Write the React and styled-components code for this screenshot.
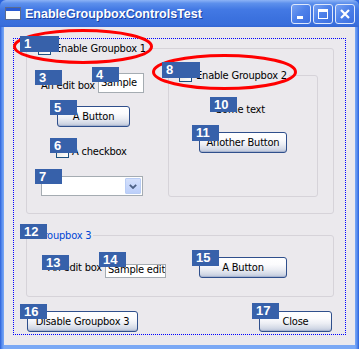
import React from "react";
import styled, { createGlobalStyle } from "styled-components";

const UI = `"DejaVu Sans Condensed", "DejaVu Sans", sans-serif`;
const TITLE = `"Liberation Sans", Arial, sans-serif`;

const Global = createGlobalStyle`
  html, body { margin: 0; padding: 0; background: #ffffff; }
  body { font-family: ${UI}; }
`;

const uiText = `
  font-family: ${UI};
  font-stretch: semi-condensed;
  font-size: 11px;
  line-height: 13px;
  letter-spacing: -0.2px;
`;

const Window = styled.div`
  position: relative;
  width: 359px;
  height: 349px;
  display: flex;
  flex-direction: column;
  background: #2a63de;
  overflow: hidden;
`;

const TitleBar = styled.div`
  height: 27px;
  flex: none;
  display: flex;
  align-items: center;
  padding: 0 4px 0 5px;
  box-sizing: border-box;
  background: linear-gradient(#8db3f6 0%, #5d90ec 12%, #4379e4 35%, #3b71de 70%, #3a6fdc 90%, #3366d4 100%);
  border-radius: 6px 6px 0 0;
`;

const Title = styled.div`
  margin-left: 4px;
  flex: 1;
  color: #ffffff;
  font: bold 12.5px ${TITLE};
  text-shadow: 1px 1px 0 #1a3f9e;
  white-space: nowrap;
`;

const CaptionButtons = styled.div`
  display: flex;
  gap: 2px;
  margin-top: 1px;
`;

const CaptionButton = styled.div`
  box-sizing: border-box;
  width: 20px;
  height: 20px;
  border: 1px solid #dfe8fb;
  border-radius: 3px;
  background: linear-gradient(135deg, #78a2f2 0%, #4f82ea 45%, #3c6fe0 100%);
  display: flex;
  align-items: center;
  justify-content: center;
`;

const Frame = styled.div`
  flex: 1;
  display: flex;
  padding: 0 4px 4px 4px;
  background: linear-gradient(90deg, #2b60d8 0, #5a8ff0 2px, #7aa8f5 4px, #7aa8f5 355px, #5a8ff0 357px, #2b60d8 359px);
`;

const Client = styled.div`
  flex: 1;
  background: #ebe9ed;
  display: flex;
  flex-direction: column;
`;

const FocusRect = styled.div`
  box-sizing: border-box;
  margin: 11px 0 0 9px;
  width: 333px;
  height: 297px;
  border: 1px dotted #0000ff;
  display: flex;
  flex-direction: column;
`;

const GroupBox = styled.fieldset`
  box-sizing: border-box;
  margin: ${(p) => p.$mt}px 0 0 ${(p) => p.$ml}px;
  padding: 0;
  width: ${(p) => p.$w}px;
  height: ${(p) => p.$h}px;
  border: 1px solid #d6d3d9;
  border-radius: 3px;
  min-width: 0;
  flex: none;
`;

const Legend = styled.legend`
  margin-left: ${(p) => p.$ml}px;
  padding: 0 2px;
  height: 13px;
  ${uiText}
  color: ${(p) => p.$color || "#000000"};
`;

const LegendInner = styled.span`
  display: flex;
  align-items: center;
  gap: 4px;
  height: 13px;
`;

const Text = styled.div`
  ${uiText}
  color: #000;
  white-space: nowrap;
  height: 13px;
  width: ${(p) => (p.$w ? `${p.$w}px` : "auto")};
  margin: ${(p) => p.$mt || 0}px 0 0 ${(p) => p.$ml || 0}px;
  flex: none;
`;

const CheckBox = styled.span`
  box-sizing: border-box;
  display: block;
  width: 13px;
  height: 13px;
  flex: none;
  border: 1px solid #1c5180;
  background: linear-gradient(135deg, #dcdcd7 0%, #f4f4f1 60%, #ffffff 100%);
`;

const CheckRow = styled.div`
  display: flex;
  align-items: center;
  gap: 3px;
  margin: ${(p) => p.$mt}px 0 0 ${(p) => p.$ml}px;
  ${uiText}
`;

const Edit = styled.div`
  box-sizing: border-box;
  width: ${(p) => p.$w}px;
  height: ${(p) => p.$h}px;
  margin: ${(p) => p.$mt || 0}px 0 0 ${(p) => p.$ml || 0}px;
  border: 1px solid #a5acb2;
  background: #ffffff;
  padding-left: 2px;
  ${uiText}
  line-height: ${(p) => p.$lh}px;
  white-space: nowrap;
  overflow-x: clip;
  overflow-y: visible;
  flex: none;
`;

const Button = styled.div`
  box-sizing: border-box;
  width: ${(p) => p.$w}px;
  height: 21px;
  margin: ${(p) => p.$mt || 0}px 0 0 ${(p) => p.$ml || 0}px;
  border: 1px solid #2f4f8c;
  border-radius: 3px;
  background: linear-gradient(#ffffff 0%, #fbfbfd 35%, #eceef4 60%, #d3d9e6 85%, #b8c2d8 100%);
  box-shadow: inset 0 -1px 0 #a9b5cf;
  display: flex;
  align-items: center;
  justify-content: center;
  ${uiText}
  color: #000;
  white-space: nowrap;
  flex: none;
`;

const Combo = styled.div`
  box-sizing: border-box;
  width: 102px;
  height: 20px;
  margin: 18px 0 0 14px;
  border: 1px solid #a5acb2;
  background: #ffffff;
  display: flex;
  justify-content: flex-end;
  padding: 1px;
`;

const ComboArrow = styled.div`
  box-sizing: border-box;
  width: 16px;
  height: 100%;
  border: 1px solid #b9cdf5;
  border-radius: 1px;
  background: linear-gradient(#d4e0fb, #bccffa);
  display: flex;
  align-items: center;
  justify-content: center;
`;

const Row = styled.div`
  display: flex;
  align-items: flex-start;
`;

const Column = styled.div`
  display: flex;
  flex-direction: column;
  align-items: flex-start;
  width: ${(p) => p.$w}px;
  flex: none;
`;

const ButtonRow = styled.div`
  display: flex;
  justify-content: space-between;
  margin-top: 14px;
  padding: 0 13px;
`;

const Tag = styled.div`
  position: absolute;
  left: ${(p) => p.$x}px;
  top: ${(p) => p.$y}px;
  width: ${(p) => p.$w}px;
  height: ${(p) => p.$h}px;
  box-sizing: border-box;
  padding-left: 4px;
  background: #3761aa;
  color: #ffffff;
  font: bold 13px/16px ${TITLE};
  z-index: 3;
`;

const Ring = styled.svg`
  position: absolute;
  left: ${(p) => p.$x}px;
  top: ${(p) => p.$y}px;
  z-index: 2;
  overflow: visible;
`;

const tags = [
  ["1", 20, 36, 39, 16],
  ["3", 35, 70, 27, 15],
  ["4", 92, 67, 27, 15],
  ["5", 50, 100, 27, 15],
  ["6", 50, 138, 27, 15],
  ["7", 35, 169, 27, 15],
  ["8", 162, 62, 38, 16],
  ["10", 210, 97, 27, 15],
  ["11", 192, 125, 27, 16],
  ["12", 20, 224, 27, 15],
  ["13", 42, 255, 27, 15],
  ["14", 99, 252, 27, 15],
  ["15", 192, 250, 27, 16],
  ["16", 20, 304, 27, 15],
  ["17", 252, 303, 27, 16],
];

function Ellipse({ x, y, w, h }) {
  return (
    <Ring $x={x} $y={y} width={w} height={h} viewBox={`0 0 ${w} ${h}`}>
      <ellipse cx={w / 2} cy={h / 2} rx={w / 2 - 1.5} ry={h / 2 - 1.5} fill="none" stroke="#ff0000" strokeWidth="3" />
    </Ring>
  );
}

export default function App() {
  return (
    <>
      <Global />
      <Window>
        <TitleBar>
          <svg width="16" height="13" viewBox="0 0 16 13">
            <rect x="0.5" y="0.5" width="15" height="12" fill="#ffffff" stroke="#5b6b8f" />
            <rect x="1" y="1" width="14" height="3" fill="#2a5bd3" />
          </svg>
          <Title>EnableGroupboxControlsTest</Title>
          <CaptionButtons>
            <CaptionButton>
              <svg width="12" height="12" viewBox="0 0 12 12">
                <rect x="2" y="8" width="6" height="3" fill="#ffffff" />
              </svg>
            </CaptionButton>
            <CaptionButton>
              <svg width="12" height="12" viewBox="0 0 12 12">
                <rect x="1.5" y="1.5" width="9" height="9" fill="none" stroke="#ffffff" />
                <rect x="1" y="1" width="10" height="3" fill="#ffffff" />
              </svg>
            </CaptionButton>
            <CaptionButton>
              <svg width="12" height="12" viewBox="0 0 12 12">
                <path d="M2 2 L10 10 M10 2 L2 10" stroke="#ffffff" strokeWidth="2.2" />
              </svg>
            </CaptionButton>
          </CaptionButtons>
        </TitleBar>
        <Frame>
          <Client>
            <FocusRect>
              <GroupBox $mt={3} $ml={12} $w={308} $h={172}>
                <Legend $ml={9}>
                  <LegendInner>
                    <CheckBox />
                    Enable Groupbox 1
                  </LegendInner>
                </Legend>
                <Row>
                  <Column $w={141}>
                    <Row>
                      <Text $w={57} $ml={14} $mt={24}>An edit box</Text>
                      <Edit $w={46} $h={20} $lh={18} $mt={18}>Sample</Edit>
                    </Row>
                    <Button $w={73} $mt={13} $ml={30}>A Button</Button>
                    <CheckRow $mt={18} $ml={29}>
                      <CheckBox />
                      A checkbox
                    </CheckRow>
                    <Combo>
                      <ComboArrow>
                        <svg width="8" height="5" viewBox="0 0 8 5">
                          <path d="M0.8 0.8 L4 4 L7.2 0.8" fill="none" stroke="#4d6185" strokeWidth="1.8" />
                        </svg>
                      </ComboArrow>
                    </Combo>
                  </Column>
                  <GroupBox $mt={14} $ml={0} $w={150} $h={128}>
                    <Legend $ml={8}>
                      <LegendInner>
                        <CheckBox />
                        Enable Groupbox 2
                      </LegendInner>
                    </Legend>
                    <Column $w={148}>
                      <Text $mt={21} $ml={47}>Some text</Text>
                      <Button $w={88} $mt={16} $ml={30}>Another Button</Button>
                    </Column>
                  </GroupBox>
                </Row>
              </GroupBox>
              <GroupBox $mt={15} $ml={12} $w={308} $h={68}>
                <Legend $ml={7} $color="#0046d5">Groupbox 3</Legend>
                <Row>
                  <Text $w={57} $ml={21} $mt={19}>An edit box</Text>
                  <Edit $w={61} $h={14} $lh={10} $mt={22}>Sample edit</Edit>
                  <Button $w={88} $mt={15} $ml={33}>A Button</Button>
                </Row>
              </GroupBox>
              <ButtonRow>
                <Button $w={111}>Disable Groupbox 3</Button>
                <Button $w={73}>Close</Button>
              </ButtonRow>
            </FocusRect>
          </Client>
        </Frame>
        <Ellipse x={13} y={29} w={140} h={35} />
        <Ellipse x={152} y={54} w={145} h={36} />
        {tags.map(([n, x, y, w, h]) => (
          <Tag key={n} $x={x} $y={y} $w={w} $h={h}>{n}</Tag>
        ))}
      </Window>
    </>
  );
}
